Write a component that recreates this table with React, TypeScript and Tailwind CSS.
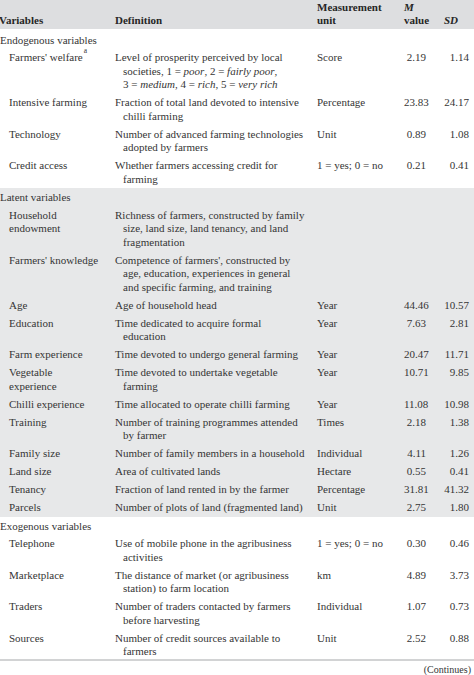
type Row = {
  name: string[];
  sup?: string;
  def: React.ReactNode[];
  unit?: string;
  m?: string;
  sd?: string;
};

type Section = {
  title: string;
  shaded?: boolean;
  rows: Row[];
};

const sections: Section[] = [
  {
    title: 'Endogenous variables',
    rows: [
      {
        name: ["Farmers' welfare"],
        sup: 'a',
        def: [
          'Level of prosperity perceived by local',
          <>
            societies, 1 = <i>poor</i>, 2 = <i>fairly poor</i>,
          </>,
          <>
            3 = <i>medium</i>, 4 = <i>rich</i>, 5 = <i>very rich</i>
          </>,
        ],
        unit: 'Score',
        m: '2.19',
        sd: '1.14',
      },
      {
        name: ['Intensive farming'],
        def: ['Fraction of total land devoted to intensive', 'chilli farming'],
        unit: 'Percentage',
        m: '23.83',
        sd: '24.17',
      },
      {
        name: ['Technology'],
        def: ['Number of advanced farming technologies', 'adopted by farmers'],
        unit: 'Unit',
        m: '0.89',
        sd: '1.08',
      },
      {
        name: ['Credit access'],
        def: ['Whether farmers accessing credit for', 'farming'],
        unit: '1 = yes; 0 = no',
        m: '0.21',
        sd: '0.41',
      },
    ],
  },
  {
    title: 'Latent variables',
    shaded: true,
    rows: [
      {
        name: ['Household', 'endowment'],
        def: [
          'Richness of farmers, constructed by family',
          'size, land size, land tenancy, and land',
          'fragmentation',
        ],
      },
      {
        name: ["Farmers' knowledge"],
        def: [
          "Competence of farmers', constructed by",
          'age, education, experiences in general',
          'and specific farming, and training',
        ],
      },
      { name: ['Age'], def: ['Age of household head'], unit: 'Year', m: '44.46', sd: '10.57' },
      {
        name: ['Education'],
        def: ['Time dedicated to acquire formal', 'education'],
        unit: 'Year',
        m: '7.63',
        sd: '2.81',
      },
      {
        name: ['Farm experience'],
        def: ['Time devoted to undergo general farming'],
        unit: 'Year',
        m: '20.47',
        sd: '11.71',
      },
      {
        name: ['Vegetable', 'experience'],
        def: ['Time devoted to undertake vegetable', 'farming'],
        unit: 'Year',
        m: '10.71',
        sd: '9.85',
      },
      {
        name: ['Chilli experience'],
        def: ['Time allocated to operate chilli farming'],
        unit: 'Year',
        m: '11.08',
        sd: '10.98',
      },
      {
        name: ['Training'],
        def: ['Number of training programmes attended', 'by farmer'],
        unit: 'Times',
        m: '2.18',
        sd: '1.38',
      },
      {
        name: ['Family size'],
        def: ['Number of family members in a household'],
        unit: 'Individual',
        m: '4.11',
        sd: '1.26',
      },
      { name: ['Land size'], def: ['Area of cultivated lands'], unit: 'Hectare', m: '0.55', sd: '0.41' },
      {
        name: ['Tenancy'],
        def: ['Fraction of land rented in by the farmer'],
        unit: 'Percentage',
        m: '31.81',
        sd: '41.32',
      },
      {
        name: ['Parcels'],
        def: ['Number of plots of land (fragmented land)'],
        unit: 'Unit',
        m: '2.75',
        sd: '1.80',
      },
    ],
  },
  {
    title: 'Exogenous variables',
    rows: [
      {
        name: ['Telephone'],
        def: ['Use of mobile phone in the agribusiness', 'activities'],
        unit: '1 = yes; 0 = no',
        m: '0.30',
        sd: '0.46',
      },
      {
        name: ['Marketplace'],
        def: ['The distance of market (or agribusiness', 'station) to farm location'],
        unit: 'km',
        m: '4.89',
        sd: '3.73',
      },
      {
        name: ['Traders'],
        def: ['Number of traders contacted by farmers', 'before harvesting'],
        unit: 'Individual',
        m: '1.07',
        sd: '0.73',
      },
      {
        name: ['Sources'],
        def: ['Number of credit sources available to', 'farmers'],
        unit: 'Unit',
        m: '2.52',
        sd: '0.88',
      },
    ],
  },
];

const cols = 'grid grid-cols-[115px_202px_87px_24px_46px]';

function DataRow({ row }: { row: Row }) {
  return (
    <div className={`${cols} pt-[2.5px] pb-[2px]`}>
      <div className="pl-[9px] whitespace-nowrap">
        {row.name.map((n, i) => (
          <div key={i}>
            {n}
            {row.sup && i === 0 && (
              <sup className="ml-[1px] text-[7.5px] leading-none align-[4px]">{row.sup}</sup>
            )}
          </div>
        ))}
      </div>
      <div className="whitespace-nowrap">
        {row.def.map((d, i) => (
          <div key={i} className={i > 0 ? 'pl-[8px]' : ''}>
            {d}
          </div>
        ))}
      </div>
      <div className="whitespace-nowrap">{row.unit}</div>
      <div className="pr-[2px] text-right">{row.m}</div>
      <div className="pr-[5px] text-right">{row.sd}</div>
    </div>
  );
}

export default function App() {
  return (
    <div
      className="w-[474px] h-[675px] overflow-hidden bg-white text-[#353535] text-[11px] leading-[13.5px]"
      style={{ fontFamily: '"Liberation Serif", "Times New Roman", serif' }}
    >
      {/* Header */}
      <div className={`${cols} items-end bg-[#dddee0] pt-[1px] pb-[1.5px] font-bold text-[#262626] leading-[13px]`}>
        <div className="-ml-[1px]">Variables</div>
        <div>Definition</div>
        <div>
          <div>Measurement</div>
          <div>unit</div>
        </div>
        <div className="whitespace-nowrap">
          <div>
            <i>M</i>
          </div>
          <div>value</div>
        </div>
        <div className="pl-[16px]">
          <i>SD</i>
        </div>
      </div>

      {sections.map((s, si) => (
        <div key={s.title} className={s.shaded ? 'bg-[#e7e8e9]' : ''}>
          <div className={`${si === 0 ? 'pt-[5px]' : 'pt-[3px]'} pb-[1.5px]`}>{s.title}</div>
          {s.rows.map((r, ri) => (
            <DataRow key={ri} row={r} />
          ))}
        </div>
      ))}

      <div className="-mt-[2px] h-[2px] bg-[#d2d3d4]" />
      <div className="pt-[3px] pr-[3px] text-right text-[10px] leading-[12px]">(Continues)</div>
    </div>
  );
}
